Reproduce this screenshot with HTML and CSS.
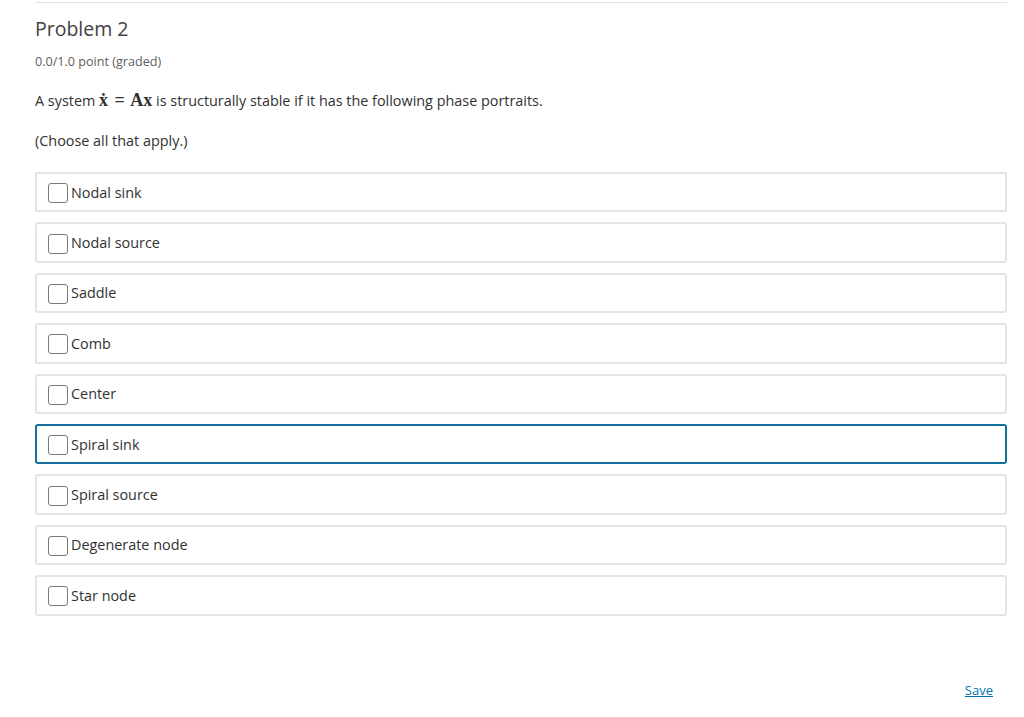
FILE: index.html
```html
<!DOCTYPE html>
<html>
<head>
<meta charset="utf-8">
<link rel="stylesheet" href="styles.css">
</head>
<body>
<div class="problem">
  <h3 class="title">Problem 2</h3>
  <div class="points">0.0/1.0 point (graded)</div>
  <p class="stem">A system <span class="math">ẋ <span class="eq">=</span> Ax</span> is structurally stable if it has the following phase portraits.</p>
  <p class="stem hint">(Choose all that apply.)</p>
  <div class="choices">
    <label class="choice"><span class="box"></span><span class="label">Nodal sink</span></label>
    <label class="choice"><span class="box"></span><span class="label">Nodal source</span></label>
    <label class="choice"><span class="box"></span><span class="label">Saddle</span></label>
    <label class="choice"><span class="box"></span><span class="label">Comb</span></label>
    <label class="choice"><span class="box"></span><span class="label">Center</span></label>
    <label class="choice focused"><span class="box"></span><span class="label">Spiral sink</span></label>
    <label class="choice"><span class="box"></span><span class="label">Spiral source</span></label>
    <label class="choice"><span class="box"></span><span class="label">Degenerate node</span></label>
    <label class="choice"><span class="box"></span><span class="label">Star node</span></label>
  </div>
  <div class="actions"><a class="save" href="#">Save</a></div>
</div>
</body>
</html>
```
FILE: styles.css
```css
html, body {
  margin: 0;
  padding: 0;
  background: #fff;
}
body {
  font-family: "Open Sans", "Noto Sans", sans-serif;
  color: #313131;
}
.problem {
  margin: 2px 17px 0 35px;
  border-top: 1px solid #e2e2e2;
}
.title {
  margin: 11px 0 0 0;
  font-size: 19.5px;
  font-weight: 400;
  line-height: 30px;
  color: #414141;
}
.points {
  margin-top: 9px;
  font-size: 12.6px;
  line-height: 18px;
  color: #5e5e5e;
}
.stem {
  margin: 18px 0 0 0;
  font-size: 14.4px;
  line-height: 22px;
}
.hint {
  margin-top: 18px;
}
.math {
  font-family: "Liberation Serif", "DejaVu Serif", serif;
  font-weight: 700;
  font-size: 18px;
}
.math .eq {
  font-weight: 700;
  padding: 0 2px;
}
.choices {
  margin-top: 20px;
  display: flex;
  flex-direction: column;
  gap: 10px;
}
.choice {
  box-sizing: border-box;
  height: 40.4px;
  border: 2px solid #e4e4e4;
  border-radius: 3px;
  display: flex;
  align-items: center;
  padding-left: 11px;
  font-size: 14.4px;
  color: #313131;
}
.choice.focused {
  border-color: #126f9a;
}
.box {
  box-sizing: border-box;
  width: 20px;
  height: 20px;
  border: 1px solid #7a7a7a;
  border-radius: 3px;
  margin-top: 2px;
  margin-right: 3px;
  background: #fff;
}
.actions {
  display: flex;
  justify-content: flex-end;
  margin-top: 65px;
  padding-right: 14px;
}
.save {
  font-size: 13px;
  color: #0075b4;
  text-decoration: underline;
}
```
